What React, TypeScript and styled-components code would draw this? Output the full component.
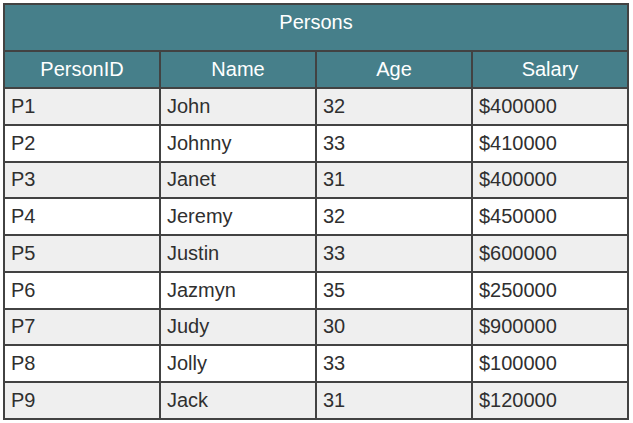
import React from "react";
import styled, { createGlobalStyle } from "styled-components";

const GlobalStyle = createGlobalStyle`
  html, body {
    margin: 0;
    padding: 0;
    background: #ffffff;
  }
  body {
    font-family: "Liberation Sans", Arial, sans-serif;
  }
`;

const Page = styled.div`
  padding: 3px;
`;

const Table = styled.table`
  width: 626px;
  table-layout: fixed;
  border-collapse: separate;
  border-spacing: 0;
  border-left: 2px solid #424242;
  border-top: 2px solid #424242;
  font-family: "Liberation Sans", Arial, sans-serif;
  font-size: 20px;
`;

const Cell = styled.td`
  box-sizing: border-box;
  border-right: 2px solid #424242;
  border-bottom: 2px solid #424242;
  padding: 0 5px;
  line-height: 23px;
  vertical-align: middle;
`;

const TitleCell = styled(Cell).attrs({ as: "th" })`
  height: 47px;
  padding: 0 5px 10px;
  background: #467f8a;
  color: #ffffff;
  font-weight: normal;
  text-align: center;
`;

const HeadCell = styled(Cell).attrs({ as: "th" })`
  width: 156px;
  height: 37px;
  background: #467f8a;
  color: #ffffff;
  font-weight: normal;
  text-align: center;
`;

const BodyRow = styled.tr<{ $alt: boolean }>`
  background: ${(p) => (p.$alt ? "#efefef" : "#ffffff")};
`;

const DataCell = styled(Cell)`
  height: 36.75px;
  padding: 0 5px 0 6px;
  color: #2f2f2f;
  text-align: left;
`;

const persons = [
  ["P1", "John", "32", "$400000"],
  ["P2", "Johnny", "33", "$410000"],
  ["P3", "Janet", "31", "$400000"],
  ["P4", "Jeremy", "32", "$450000"],
  ["P5", "Justin", "33", "$600000"],
  ["P6", "Jazmyn", "35", "$250000"],
  ["P7", "Judy", "30", "$900000"],
  ["P8", "Jolly", "33", "$100000"],
  ["P9", "Jack", "31", "$120000"],
];

const columns = ["PersonID", "Name", "Age", "Salary"];

export default function App() {
  return (
    <>
      <GlobalStyle />
      <Page>
        <Table>
          <thead>
            <tr>
              <TitleCell colSpan={4}>Persons</TitleCell>
            </tr>
            <tr>
              {columns.map((c) => (
                <HeadCell key={c}>{c}</HeadCell>
              ))}
            </tr>
          </thead>
          <tbody>
            {persons.map((row, i) => (
              <BodyRow key={row[0]} $alt={i % 2 === 0}>
                {row.map((v, j) => (
                  <DataCell key={j}>{v}</DataCell>
                ))}
              </BodyRow>
            ))}
          </tbody>
        </Table>
      </Page>
    </>
  );
}
